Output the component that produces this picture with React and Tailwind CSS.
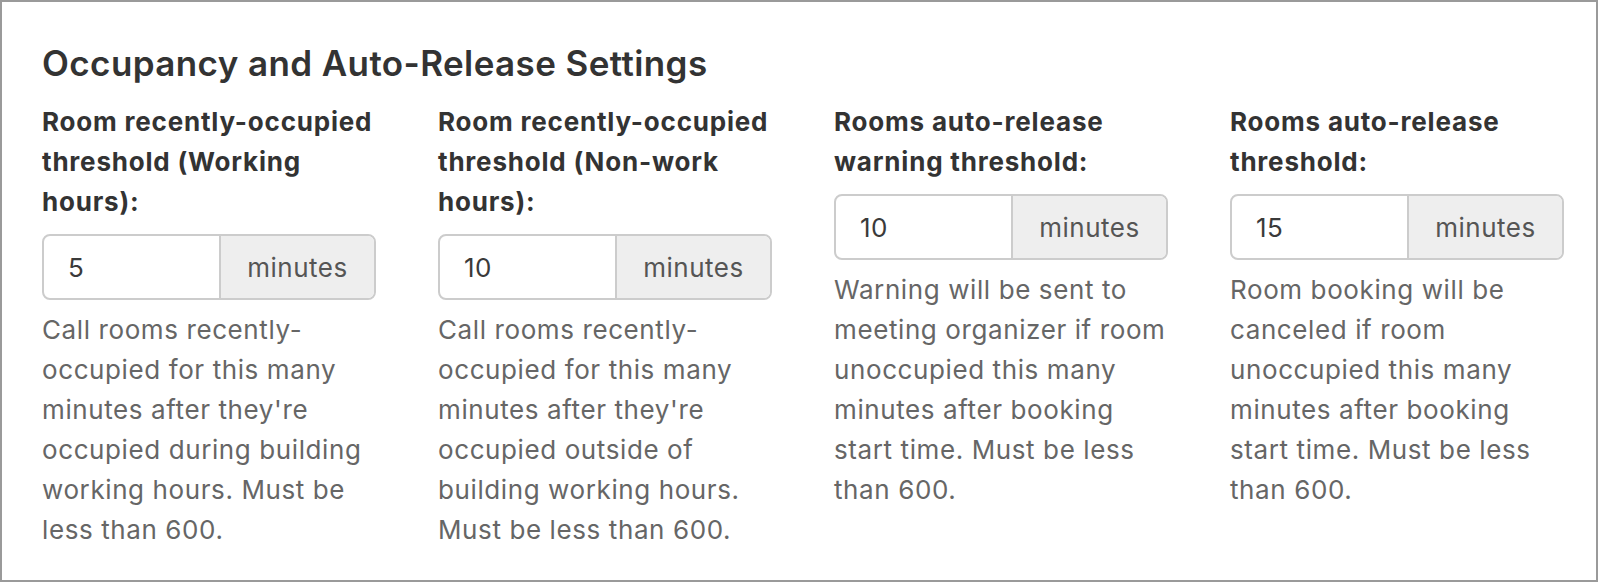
import React from 'react'

const settings = [
    {
        label: ['Room recently-occupied', 'threshold (Working', 'hours):'],
        value: '5',
        help: ['Call rooms recently-', 'occupied for this many', "minutes after they're", 'occupied during building', 'working hours. Must be', 'less than 600.']
    },
    {
        label: ['Room recently-occupied', 'threshold (Non-work', 'hours):'],
        value: '10',
        help: ['Call rooms recently-', 'occupied for this many', "minutes after they're", 'occupied outside of', 'building working hours.', 'Must be less than 600.']
    },
    {
        label: ['Rooms auto-release', 'warning threshold:'],
        value: '10',
        help: ['Warning will be sent to', 'meeting organizer if room', 'unoccupied this many', 'minutes after booking', 'start time. Must be less', 'than 600.']
    },
    {
        label: ['Rooms auto-release', 'threshold:'],
        value: '15',
        help: ['Room booking will be', 'canceled if room', 'unoccupied this many', 'minutes after booking', 'start time. Must be less', 'than 600.']
    }
]

function Lines({ lines }) {
    return lines.map((line, i) => (
        <span key={i} className="block whitespace-nowrap">{line}</span>
    ))
}

export default function App() {
    return (
        <div className="h-[582px] overflow-hidden border-2 border-[#9a9a9a] bg-white pl-[40px] pt-[41px] font-['Inter','Noto_Sans',sans-serif]">
            <h3 className="mb-[19px] text-[35px] leading-[40px] font-semibold tracking-[0.4px] text-[#333]">
                Occupancy and Auto-Release Settings
            </h3>

            <div className="grid grid-cols-[repeat(4,334px)] gap-x-[62px]">
                {settings.map((s) => (
                    <div key={s.value + s.label[0]} className="flex flex-col">
                        <label className="mb-[12px] text-[26px] leading-[40px] font-bold tracking-[0.8px] text-[#333]">
                            <Lines lines={s.label} />
                        </label>
                        <div className="flex h-[66px] rounded-[8px] border-2 border-[#ccc]">
                            <input
                                type="text"
                                defaultValue={s.value}
                                className="w-[175px] bg-transparent pl-[24px] text-[26px] tracking-[0.5px] text-[#3a3a3a] outline-none"
                            />
                            <span className="flex flex-1 items-center justify-center rounded-r-[6px] border-l-2 border-[#ccc] bg-[#eee] text-[26px] tracking-[0.5px] text-[#555]">
                                minutes
                            </span>
                        </div>
                        <p className="mt-[10px] text-[26px] leading-[40px] tracking-[0.6px] text-[#666]">
                            <Lines lines={s.help} />
                        </p>
                    </div>
                ))}
            </div>

            <p className="mt-[24px] whitespace-nowrap text-[26px] leading-[40px] tracking-[0.5px] text-[#666]">
                Occupancy sensors will mark a room as occupied when motion is detected in the room during the booking.
            </p>
        </div>
    )
}
